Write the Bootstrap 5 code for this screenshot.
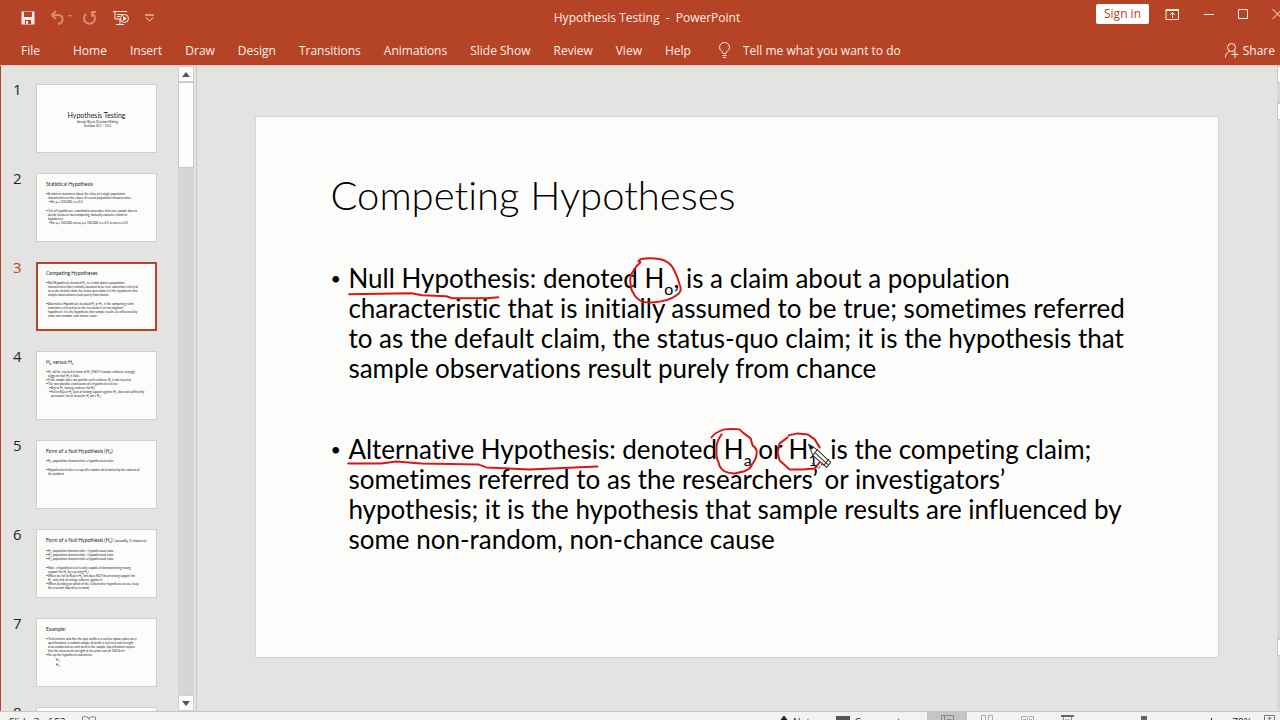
<!DOCTYPE html>
<html lang="en">
<head>
<meta charset="utf-8">
<meta name="viewport" content="width=device-width, initial-scale=1">
<title>Hypothesis Testing - PowerPoint</title>
<link href="https://cdn.jsdelivr.net/npm/bootstrap@5.3.0/dist/css/bootstrap.min.css" rel="stylesheet">
<style>
:root { --brand: #b54427; --canvas: #e3e4e2; --paper: #fcfdfb; }
body { font-family: "Open Sans", "Noto Sans", sans-serif; font-size: 12px; background: var(--canvas); color: #262626; }
button { border: 0; background: none; padding: 0; color: inherit; }
svg { display: block; fill: none; stroke: currentColor; }

.app-head { background: var(--brand); color: #fdeee8; border-bottom: 1px solid #f5c4b4; }
.title-row { height: 36px; }
.quick { padding-left: 21px; }
.faded { color: #d98a73; }
.doc-name { padding-left: 14px; }
.sign-in { background: #fff; color: var(--brand); border-radius: 2px; padding: 0 8px; height: 20px; line-height: 18px; margin-top: -8px; }
.window-tools { margin-right: -3px; }
.window-tools svg { margin-top: -8px; }
.menu-row { height: 29px; padding-left: 9px; padding-right: 5px; }
.menu-row a { color: inherit; text-decoration: none; padding: 0 11px 0 12px; line-height: 28px; }
.menu-row a.file-tab { padding-right: 21px; }
.tell-box { margin-left: 16px; }
.tell { background: none; border: 0; color: inherit; width: 180px; padding: 0; outline: 0; line-height: 28px; }
.tell::placeholder { color: inherit; opacity: 1; }

.work { min-height: 0; border-left: 1px solid var(--brand); }
.rail { width: 177px; padding: 18px 0 0 12px; }
.rail li { height: 89px; display: flex; gap: 13px; }
.rail-num { width: 10px; font-size: 15px; line-height: 10px; }
.mini { width: 121px; height: 69px; background: var(--paper); border: 1px solid #cfd0ce; padding: 7px 0 0 9px; font: 3px/4px Lato, sans-serif; color: #222; white-space: nowrap; overflow: hidden; text-align: left; display: flex; flex-direction: column; justify-content: flex-start; font-variant-ligatures: none; }
.mini b { display: block; font-size: 5px; line-height: 6px; font-weight: 400; margin-bottom: 5px; }
.mini span { display: block; padding-left: 2px; }
.mini span.dot::before { content: "•"; margin-left: -2px; display: inline-block; width: 2px; }
.mini span.deep { padding-left: 5px; }
.mini span.inner { padding-left: 10px; margin-top: 1px; }
.mini .gap { margin-top: 5px; }
.mini sub { font-size: 2px; line-height: 0; }
.mini b sub { font-size: 3px; }
.mini small { font-size: 4px; }
.mini.cover { text-align: center; padding: 26px 0 0; }
.mini.cover b { font-size: 7px; line-height: 8px; margin-bottom: 1px; }
.chosen .rail-num { color: #c8401c; }
.chosen .mini { border: 2px solid #b54427; padding: 6px 0 0 8px; }

.rail-wrap { border-right: 1px solid #c9cac8; padding-right: 2px; }
.scroll-col { width: 16px; background: #d6d7d5; }
.scroll-col button { height: 16px; background: var(--paper); color: #555; border: 1px solid #d0d0ce; }
.scroll-col .grip { height: 86px; background: var(--paper); border: 1px solid #c8c9c7; }
.edge { width: 3px; background: #d6d7d5; padding-bottom: 55px; }
.edge i { display: block; height: 17px; background: var(--paper); border: 1px solid #c4c5c3; border-right: 0; }
.edge .thumb-grip { margin-top: 20px; }

.stage { padding-bottom: 3px; }
.slide { width: 89%; aspect-ratio: 16 / 9; background: var(--paper); outline: 1px solid #d5d6d4; padding: 44px 0 0 74px; color: #000; font-family: Lato, sans-serif; white-space: nowrap; font-variant-ligatures: none; }
.slide h1 { font-size: 40px; line-height: 68px; font-weight: 300; margin: 0 0 34px; }
.slide ul { padding-left: 18px; margin: 0; font-size: 26px; line-height: 30px; list-style: none; }
.slide li { position: relative; margin-bottom: 51px; }
.slide li::before { content: "•"; position: absolute; left: -18px; font-size: 18px; }
.slide sub { font-size: 16px; line-height: 0; bottom: -7px; }
.ink { inset: 0; stroke: #d3191c; }

.status { height: 9px; background: #f1f3f0; border-top: 1px solid #c5c8c4; overflow: hidden; font-size: 10px; }
.status-line { height: 20px; padding-left: 9px; padding-right: 2px; }
.view-on { background: #c3c6c2; }
.view-set { margin: 0 12px 0 22px; }
.view-set button { width: 40px; height: 20px; }
.zoom-bar { appearance: none; width: 104px; height: 12px; margin: 0; background: none; }
.zoom-bar::-webkit-slider-thumb { appearance: none; width: 6px; height: 12px; background: #666; }
.zoom-value { margin: 0 12px 0 16px; }
</style>
</head>
<body class="vh-100 d-flex flex-column overflow-hidden">
<header class="app-head flex-shrink-0">
  <div class="title-row d-flex align-items-center position-relative">
    <div class="quick d-flex align-items-center">
      <button aria-label="Save"><svg width="14" height="14" viewBox="0 0 14 14"><path d="M.5 .5h13v13H.5z" fill="currentColor" stroke="none"/><path d="M3 1h8v5H3zM4 9h6v4H4z" fill="#b54427" stroke="none"/><path d="M5 10h2v3H5z" fill="currentColor" stroke="none"/></svg></button>
      <button class="faded ms-3" aria-label="Undo"><svg width="24" height="16" viewBox="0 0 24 16" stroke-width="2"><path d="M5 1L1 5l4 4M1 5h6c6 0 6 8 0 9"/><path d="M17 5h4l-2 2z" fill="currentColor" stroke="none"/></svg></button>
      <button class="faded ms-2" aria-label="Redo"><svg width="14" height="16" viewBox="0 0 14 16" stroke-width="2"><path d="M3 4a5.500 5.500 0 1 0 7 0M13 2H9v5"/></svg></button>
      <button class="ms-3" aria-label="Start slide show"><svg width="16" height="16" viewBox="0 0 16 16"><path d="M0 1.500h14M2 2v7h6M4 4.500h6M4 6.500h3M7 9v5M3 14.500h8"/><circle cx="11.500" cy="8.500" r="4"/><path d="M10 6l4 2.500L10 11z" fill="currentColor" stroke="none"/></svg></button>
      <button class="ms-3" aria-label="Customize toolbar"><svg width="9" height="8" viewBox="0 0 9 8"><path d="M0 1h9M1 3.500l3.500 3.500L8 3.500"/></svg></button>
    </div>
    <div class="position-absolute start-50 translate-middle-x"><span class="doc-name">Hypothesis Testing&nbsp; -&nbsp; PowerPoint</span></div>
    <div class="window-tools ms-auto d-flex align-items-center">
      <button class="sign-in">Sign in</button>
      <button class="ms-3" aria-label="Ribbon display options"><svg width="15" height="11" viewBox="0 0 15 11"><path d="M1 .5h12.500v10H1z"/><path d="M1 1.500h12M7.500 9V4M5 6l2.500-2.500L10 6"/></svg></button>
      <button class="ms-4" aria-label="Minimize"><svg width="10" height="10" viewBox="0 0 10 10"><path d="M0 5.500h10"/></svg></button>
      <button class="ms-4" aria-label="Maximize"><svg width="10" height="10" viewBox="0 0 10 10"><path d="M.5 .5h9v9h-9z"/></svg></button>
      <button class="ms-4" aria-label="Close"><svg width="11" height="10" viewBox="0 0 11 10"><path d="M.5 0l10 10M10.500 0l-10 10"/></svg></button>
    </div>
  </div>
  <nav class="menu-row d-flex align-items-center">
    <a class="file-tab" href="#">File</a><a href="#">Home</a><a href="#">Insert</a><a href="#">Draw</a><a href="#">Design</a><a href="#">Transitions</a><a href="#">Animations</a><a href="#">Slide Show</a><a href="#">Review</a><a href="#">View</a><a href="#">Help</a>
    <label class="tell-box d-flex align-items-center"><svg class="me-2" width="17" height="17" viewBox="0 0 17 17"><path d="M5 11.500C5 9 1.500 8.500 1.500 5.500a5 5 0 0 1 10 0C11.500 8.500 8 9 8 11.500zM4.500 13.500h4M5 15.500h3"/></svg><input class="tell" type="text" aria-label="Tell me what you want to do" placeholder="Tell me what you want to do"></label>
    <button class="ms-auto d-flex align-items-center gap-1"><svg width="14" height="15" viewBox="0 0 14 15"><circle cx="6.500" cy="4.500" r="4"/><path d="M.5 14.500c0-4 2-5 4-6M8 8.500l1 1M6.500 11.500h7M10 8v7"/></svg>Share</button>
  </nav>
</header>

<main class="work d-flex flex-fill">
  <aside class="rail-wrap d-flex flex-shrink-0 overflow-hidden">
    <ol class="rail list-unstyled m-0">
      <li><span class="rail-num">1</span><button class="mini cover"><b>Hypothesis Testing</b><span>Accept-Reject Decision Making</span><span>Sections 10.1 – 10.2</span></button></li>
      <li><span class="rail-num">2</span><button class="mini"><b>Statistical Hypothesis</b><span class="dot">A claim or statement about the value of a single population</span><span>characteristic or the values of several population characteristics</span><span class="deep dot">Ex: μ = 100,000, σ = 0.5</span><span class="dot gap">Test of hypotheses: a method or procedure that uses sample data to</span><span>decide between two competing, mutually exclusive claims or</span><span>hypotheses</span><span class="deep dot">Ex: μ = 100,000 versus μ ≠ 100,000, σ = 0.5 versus σ ≠ 0.5</span></button></li>
      <li class="chosen"><span class="rail-num">3</span><button class="mini"><b>Competing Hypotheses</b><span class="dot">Null Hypothesis: denoted H<sub>o</sub>, is a claim about a population</span><span>characteristic that is initially assumed to be true; sometimes referred</span><span>to as the default claim, the status-quo claim; it is the hypothesis that</span><span>sample observations result purely from chance</span><span class="dot gap">Alternative Hypothesis: denoted H<sub>a</sub> or H<sub>1</sub>, is the competing claim;</span><span>sometimes referred to as the researchers’ or investigators’</span><span>hypothesis; it is the hypothesis that sample results are influenced by</span><span>some non-random, non-chance cause</span></button></li>
      <li><span class="rail-num">4</span><button class="mini"><b>H<sub>o</sub> versus H<sub>a</sub></b><span class="dot">H<sub>o</sub> will be rejected in favor of H<sub>a</sub> ONLY if sample evidence strongly</span><span>suggests that H<sub>o</sub> is false.</span><span class="dot">If the sample does not provide such evidence H<sub>o</sub> is not rejected</span><span class="dot">The two possible conclusions of a hypothesis test are:</span><span class="deep dot">Reject H<sub>o</sub> (strong evidence for H<sub>a</sub>)</span><span class="deep dot">Fail to Reject H<sub>o</sub> (lack of strong support against H<sub>o</sub>, data not sufficiently</span><span class="deep">persuasive for us to prefer H<sub>a</sub> over H<sub>o</sub>)</span></button></li>
      <li><span class="rail-num">5</span><button class="mini"><b>Form of a Null Hypothesis (H<sub>o</sub>)</b><span class="dot">H<sub>o</sub>: population characteristic = hypothesized value</span><span class="dot gap">Hypothesized value is a specific number determined by the context of</span><span>the problem</span></button></li>
      <li><span class="rail-num">6</span><button class="mini"><b>Form of a Null Hypothesis (H<sub>a</sub>): <small>(usually 3 choices)</small></b><span class="dot">H<sub>a</sub>: population characteristic &gt; hypothesized value</span><span class="dot">H<sub>a</sub>: population characteristic &lt; hypothesized value</span><span class="dot">H<sub>a</sub>: population characteristic ≠ hypothesized value</span><span class="dot gap">Note: a hypothesis test is only capable of demonstrating strong</span><span>support for H<sub>a</sub> (by rejecting H<sub>o</sub>)</span><span class="dot">When we fail to Reject H<sub>o</sub>, this does NOT mean strong support for</span><span>H<sub>o</sub>, only lack of strong evidence against it</span><span class="dot">When deciding on which of the 3 alternative hypotheses to use, keep</span><span>the research objectives in mind.</span></button></li>
      <li><span class="rail-num">7</span><button class="mini"><b>Example:</b><span class="dot">To determine whether the pipe welds in a nuclear power plant meet</span><span>specifications, a random sample of welds is selected and strength</span><span>tests conducted on each weld in the sample. Specifications require</span><span>that the mean weld strength at the plant exceed 100 lb/in²</span><span class="dot">Set up the hypothesis statements.</span><span class="inner">H<sub>o</sub>:</span><span class="inner">H<sub>a</sub>:</span></button></li>
      <li><span class="rail-num">8</span><button class="mini" aria-label="Slide 8"></button></li>
    </ol>
    <div class="scroll-col d-flex flex-column">
      <button aria-label="Scroll up"><svg class="mx-auto" width="8" height="5" viewBox="0 0 8 5"><path d="M0 5l4-5 4 5z" fill="currentColor" stroke="none"/></svg></button>
      <div class="grip"></div>
      <button class="mt-auto" aria-label="Scroll down"><svg class="mx-auto" width="8" height="5" viewBox="0 0 8 5"><path d="M0 0l4 5 4-5z" fill="currentColor" stroke="none"/></svg></button>
    </div>
  </aside>

  <section class="stage flex-fill d-flex align-items-center justify-content-center">
    <article class="slide position-relative">
      <h1>Competing Hypotheses</h1>
      <ul>
        <li>Null Hypothesis: denoted H<sub>o</sub>, is a claim about a population<br>characteristic that is initially assumed to be true; sometimes referred<br>to as the default claim, the status-quo claim; it is the hypothesis that<br>sample observations result purely from chance</li>
        <li>Alternative Hypothesis: denoted H<sub>a</sub> or H<sub>1</sub>, is the competing claim;<br>sometimes referred to as the researchers’ or investigators’<br>hypothesis; it is the hypothesis that sample results are influenced by<br>some non-random, non-chance cause</li>
      </ul>
      <svg class="ink position-absolute w-100 h-100" viewBox="0 0 960 540" stroke-width="2" stroke-linecap="round" stroke-linejoin="round" aria-hidden="true">
        <path d="M93 177L155 176 166 178 190 179 196 181 231 181 242 180"/>
        <path d="M382 144L384 142Q393 140 404 142Q412 144 416 150L420 158Q422 164 424 170Q425 175 420 178Q412 184 398 185Q389 186 385 184Q379 181 377 176Q374 172 374 165Q373 160 376 155L380 149 384 145"/>
        <path d="M92 346L125 346 140 344 165 346 222 347 230 350 273 352 341 349"/>
        <path d="M455 320Q458 315 468 312Q476 311 483 312L486 315 494 321 496 328Q501 332 500 336Q500 341 496 346Q494 352 487 354L478 356Q472 356 468 354Q463 351 462 345Q459 339 460 333Q459 325 465 317"/>
        <path d="M532 318L541 316 551 317 558 322 563 330M563 345L558 351 546 352 533 352 523 343 521 335 523 326 531 320"/>
        <g stroke="#333" stroke-width="1"><path d="M552 327l4 11 14 12 4-5-14-13z" fill="#fcfdfb"/><path d="M556 338l5-6M559 336l12 11M567 348l5-6" /><path d="M552 327l2 5 3-2z" fill="#111"/><path d="M556 346l6 5 4-5" stroke-dasharray="2 2"/></g>
      </svg>
    </article>
  </section>
  <div class="edge d-flex flex-column flex-shrink-0"><i></i><i class="thumb-grip"></i><i class="mt-auto"></i></div>
</main>

<footer class="status flex-shrink-0">
  <div class="status-line d-flex align-items-center">
    <span>Slide 3 of 53</span>
    <button class="ms-3" aria-label="Spelling"><svg width="14" height="14" viewBox="0 0 14 14" stroke="#888"><path d="M7 3Q3 .5 .5 2v9q4-1 6.500 1 2-2 6.500-1V2Q10 1 7 3v9" stroke="#888"/></svg></button>
    <div class="ms-auto d-flex align-items-center">
      <button class="d-flex align-items-center gap-1 me-3"><svg width="10" height="14" viewBox="0 0 10 14"><path d="M2 5l3-4 3 4z" fill="currentColor"/><path d="M0 8h10M0 11h10"/></svg>Notes</button>
      <button class="d-flex align-items-center gap-1"><svg width="14" height="14" viewBox="0 0 14 14"><path d="M0 1h14v9H6l-3 3v-3H0z" fill="#555" stroke="none"/></svg>Comments</button>
      <div class="view-set d-flex">
        <button class="view-on" aria-label="Normal view"><svg class="mx-auto" width="13" height="14" viewBox="0 0 13 14"><path d="M.5 .5h12v12H.5zM3.500 1v12M6 4.500h4v4H6z" stroke="#888"/></svg></button>
        <button aria-label="Slide sorter"><svg class="mx-auto" width="13" height="14" viewBox="0 0 13 14"><path d="M.5 .5h4v5h-4zM7.500 .5h4v5h-4zM.5 8.500h4v5h-4zM7.500 8.500h4v5h-4z" stroke="#aaa"/></svg></button>
        <button aria-label="Reading view"><svg class="mx-auto" width="13" height="14" viewBox="0 0 13 14"><path d="M.5 1.500h5l1 1 1-1h5v11H.5zM6.500 2v11M2 4.500h3M8 4.500h3" stroke="#aaa"/></svg></button>
        <button aria-label="Slide show"><svg class="mx-auto" width="13" height="14" viewBox="0 0 13 14"><path d="M0 1h13" stroke="#666" stroke-width="2"/><path d="M2.500 2v7h8V2M4 5h5M6.500 9v5" stroke="#888"/></svg></button>
      </div>
      <input class="zoom-bar" type="range" min="10" max="170" value="78" aria-label="Zoom">
      <button class="ms-1" aria-label="Zoom in"><svg width="9" height="9" viewBox="0 0 9 9"><path d="M4.500 0v9M0 4.500h9"/></svg></button>
      <span class="zoom-value">78%</span>
      <button aria-label="Fit slide to window"><svg width="14" height="14" viewBox="0 0 14 14"><path d="M.5 .5h10v12H.5zM5.500 2v8M3.500 4l2-2 2 2" stroke="#777"/></svg></button>
    </div>
  </div>
</footer>
<script src="https://cdn.jsdelivr.net/npm/bootstrap@5.3.0/dist/js/bootstrap.bundle.min.js"></script>
</body>
</html>
